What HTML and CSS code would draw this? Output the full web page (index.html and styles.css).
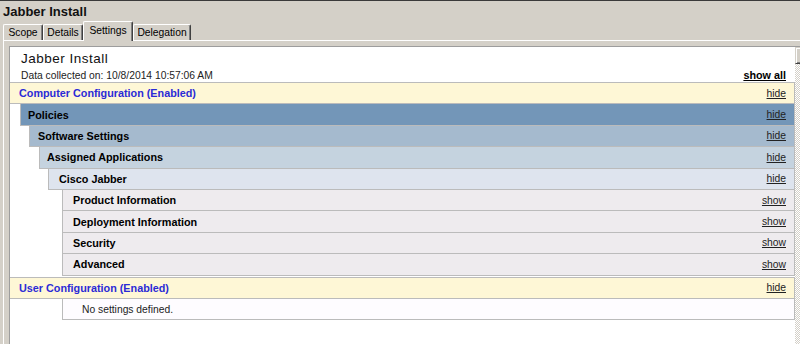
FILE: index.html
```html
<!DOCTYPE html>
<html>
<head>
<meta charset="utf-8">
<title>Jabber Install</title>
<link rel="stylesheet" href="styles.css">
</head>
<body>
<div class="app">
  <div class="title">Jabber Install</div>
  <div class="tabs">
    <div class="tab tab-scope">Scope</div>
    <div class="tab tab-details">Details</div>
    <div class="tab tab-settings active">Settings</div>
    <div class="tab tab-delegation">Delegation</div>
  </div>
  <div class="pane">
    <div class="panel">
      <div class="content">
        <div class="report-head">
          <div class="report-title">Jabber Install</div>
          <div class="meta"><span>Data collected on: 10/8/2014 10:57:06 AM</span><a class="showall">show all</a></div>
        </div>
        <div class="row lvl0"><span>Computer Configuration (Enabled)</span><a class="toggle">hide</a></div>
        <div class="row lvl1"><span>Policies</span><a class="toggle">hide</a></div>
        <div class="row lvl2"><span>Software Settings</span><a class="toggle">hide</a></div>
        <div class="row lvl3"><span>Assigned Applications</span><a class="toggle">hide</a></div>
        <div class="row lvl4"><span>Cisco Jabber</span><a class="toggle">hide</a></div>
        <div class="row lvl5"><span>Product Information</span><a class="toggle">show</a></div>
        <div class="row lvl5"><span>Deployment Information</span><a class="toggle">show</a></div>
        <div class="row lvl5"><span>Security</span><a class="toggle">show</a></div>
        <div class="row lvl5"><span>Advanced</span><a class="toggle">show</a></div>
        <div class="row lvl0 user"><span>User Configuration (Enabled)</span><a class="toggle">hide</a></div>
        <div class="row empty"><span>No settings defined.</span></div>
      </div>
      <div class="scrollbar">
        <div class="sb-btn"></div>
        <div class="sb-track"></div>
      </div>
    </div>
  </div>
</div>
</body>
</html>
```

FILE: styles.css
```css
html, body {
  margin: 0;
  padding: 0;
}

body {
  width: 800px;
  height: 344px;
  overflow: hidden;
  background: #d4d0c8;
  font-family: "Liberation Sans", Arial, sans-serif;
  color: #000;
}

.app {
  width: 830px;
  height: 344px;
  box-sizing: border-box;
  border-top: 1px solid #3a3a3a;
  display: flex;
  flex-direction: column;
}

.title {
  height: 20px;
  box-sizing: border-box;
  padding: 3px 0 0 3px;
  font-size: 13px;
  line-height: 15px;
  font-weight: bold;
  color: #111;
}

.tabs {
  display: flex;
  align-items: flex-end;
  height: 20px;
  padding-left: 3px;
  margin-bottom: -1px;
  position: relative;
  z-index: 1;
}

.tab {
  box-sizing: border-box;
  height: 16px;
  margin-bottom: 1px;
  padding-top: 1px;
  border-top: 1px solid #fff;
  border-left: 1px solid #fff;
  border-right: 1px solid #404040;
  border-radius: 2px 2px 0 0;
  box-shadow: inset -1px 0 0 #808080;
  font-size: 10.3px;
  line-height: 13px;
  text-align: center;
  color: #000;
  background: #d4d0c8;
}

.tab.active {
  height: 20px;
  margin-bottom: 0;
  padding-top: 2px;
}

.tab-scope { width: 40px; }
.tab-details { width: 40px; }
.tab-settings { width: 50px; }
.tab-delegation { width: 58px; }

.pane {
  flex: 1;
  display: flex;
  flex-direction: column;
  margin-left: 3px;
  padding: 5px 0 0 5px;
  border-top: 1px solid #fff;
  border-left: 1px solid #fff;
}

.panel {
  flex: 1;
  display: flex;
  background: #fff;
  border-top: 1px solid #9d9d9d;
  border-left: 1px solid #9d9d9d;
}

.content {
  width: 785px;
}

.report-head {
  padding: 4px 9px 0 11px;
}

.report-title {
  font-size: 13.5px;
  line-height: 16px;
  letter-spacing: 0.5px;
  color: #111;
}

.meta {
  display: flex;
  justify-content: space-between;
  align-items: baseline;
  margin-top: 2px;
  font-size: 10.3px;
  line-height: 13px;
  color: #222;
}

.showall {
  font-weight: bold;
  font-size: 10.8px;
  text-decoration: underline;
  color: #000;
}

.row {
  box-sizing: border-box;
  height: 22.4px;
  margin-bottom: -1px;
  border: 1px solid #bbbbbb;
  display: flex;
  align-items: center;
  justify-content: space-between;
  padding-right: 8px;
  font-size: 10.8px;
  font-weight: bold;
  color: #000;
}

.toggle {
  font-weight: normal;
  font-size: 10.3px;
  text-decoration: underline;
  color: #222;
}

.lvl0 {
  background: #fef7d6;
  color: #2b2bd6;
  border-left: 0;
  padding-left: 9px;
}

.lvl1 {
  margin-left: 10px;
  padding-left: 7px;
  background: #7396b8;
}

.lvl2 {
  margin-left: 19px;
  padding-left: 8px;
  background: #a5bace;
}

.lvl3 {
  margin-left: 29px;
  padding-left: 7px;
  background: #c5d3df;
}

.lvl4 {
  margin-left: 38px;
  padding-left: 10px;
  background: #dee4ee;
}

.lvl5 {
  margin-left: 52px;
  padding-left: 10px;
  background: #eeebee;
}

.user {
  margin-top: 2px;
}

.empty {
  margin-left: 52px;
  padding-left: 19px;
  background: #fefcff;
  font-weight: normal;
  font-size: 10.3px;
  color: #222;
}

.scrollbar {
  width: 17px;
  display: flex;
  flex-direction: column;
}

.sb-btn {
  height: 17px;
  box-sizing: border-box;
  background: #d4d0c8;
  border: 1px solid;
  border-color: #d4d0c8 #404040 #404040 #d4d0c8;
  box-shadow: inset 1px 1px 0 #fff, inset -1px -1px 0 #808080;
}

.sb-track {
  flex: 1;
  background: repeating-conic-gradient(#ffffff 0 25%, #d4d0c8 0 50%) 0 0 / 2px 2px;
}
```
